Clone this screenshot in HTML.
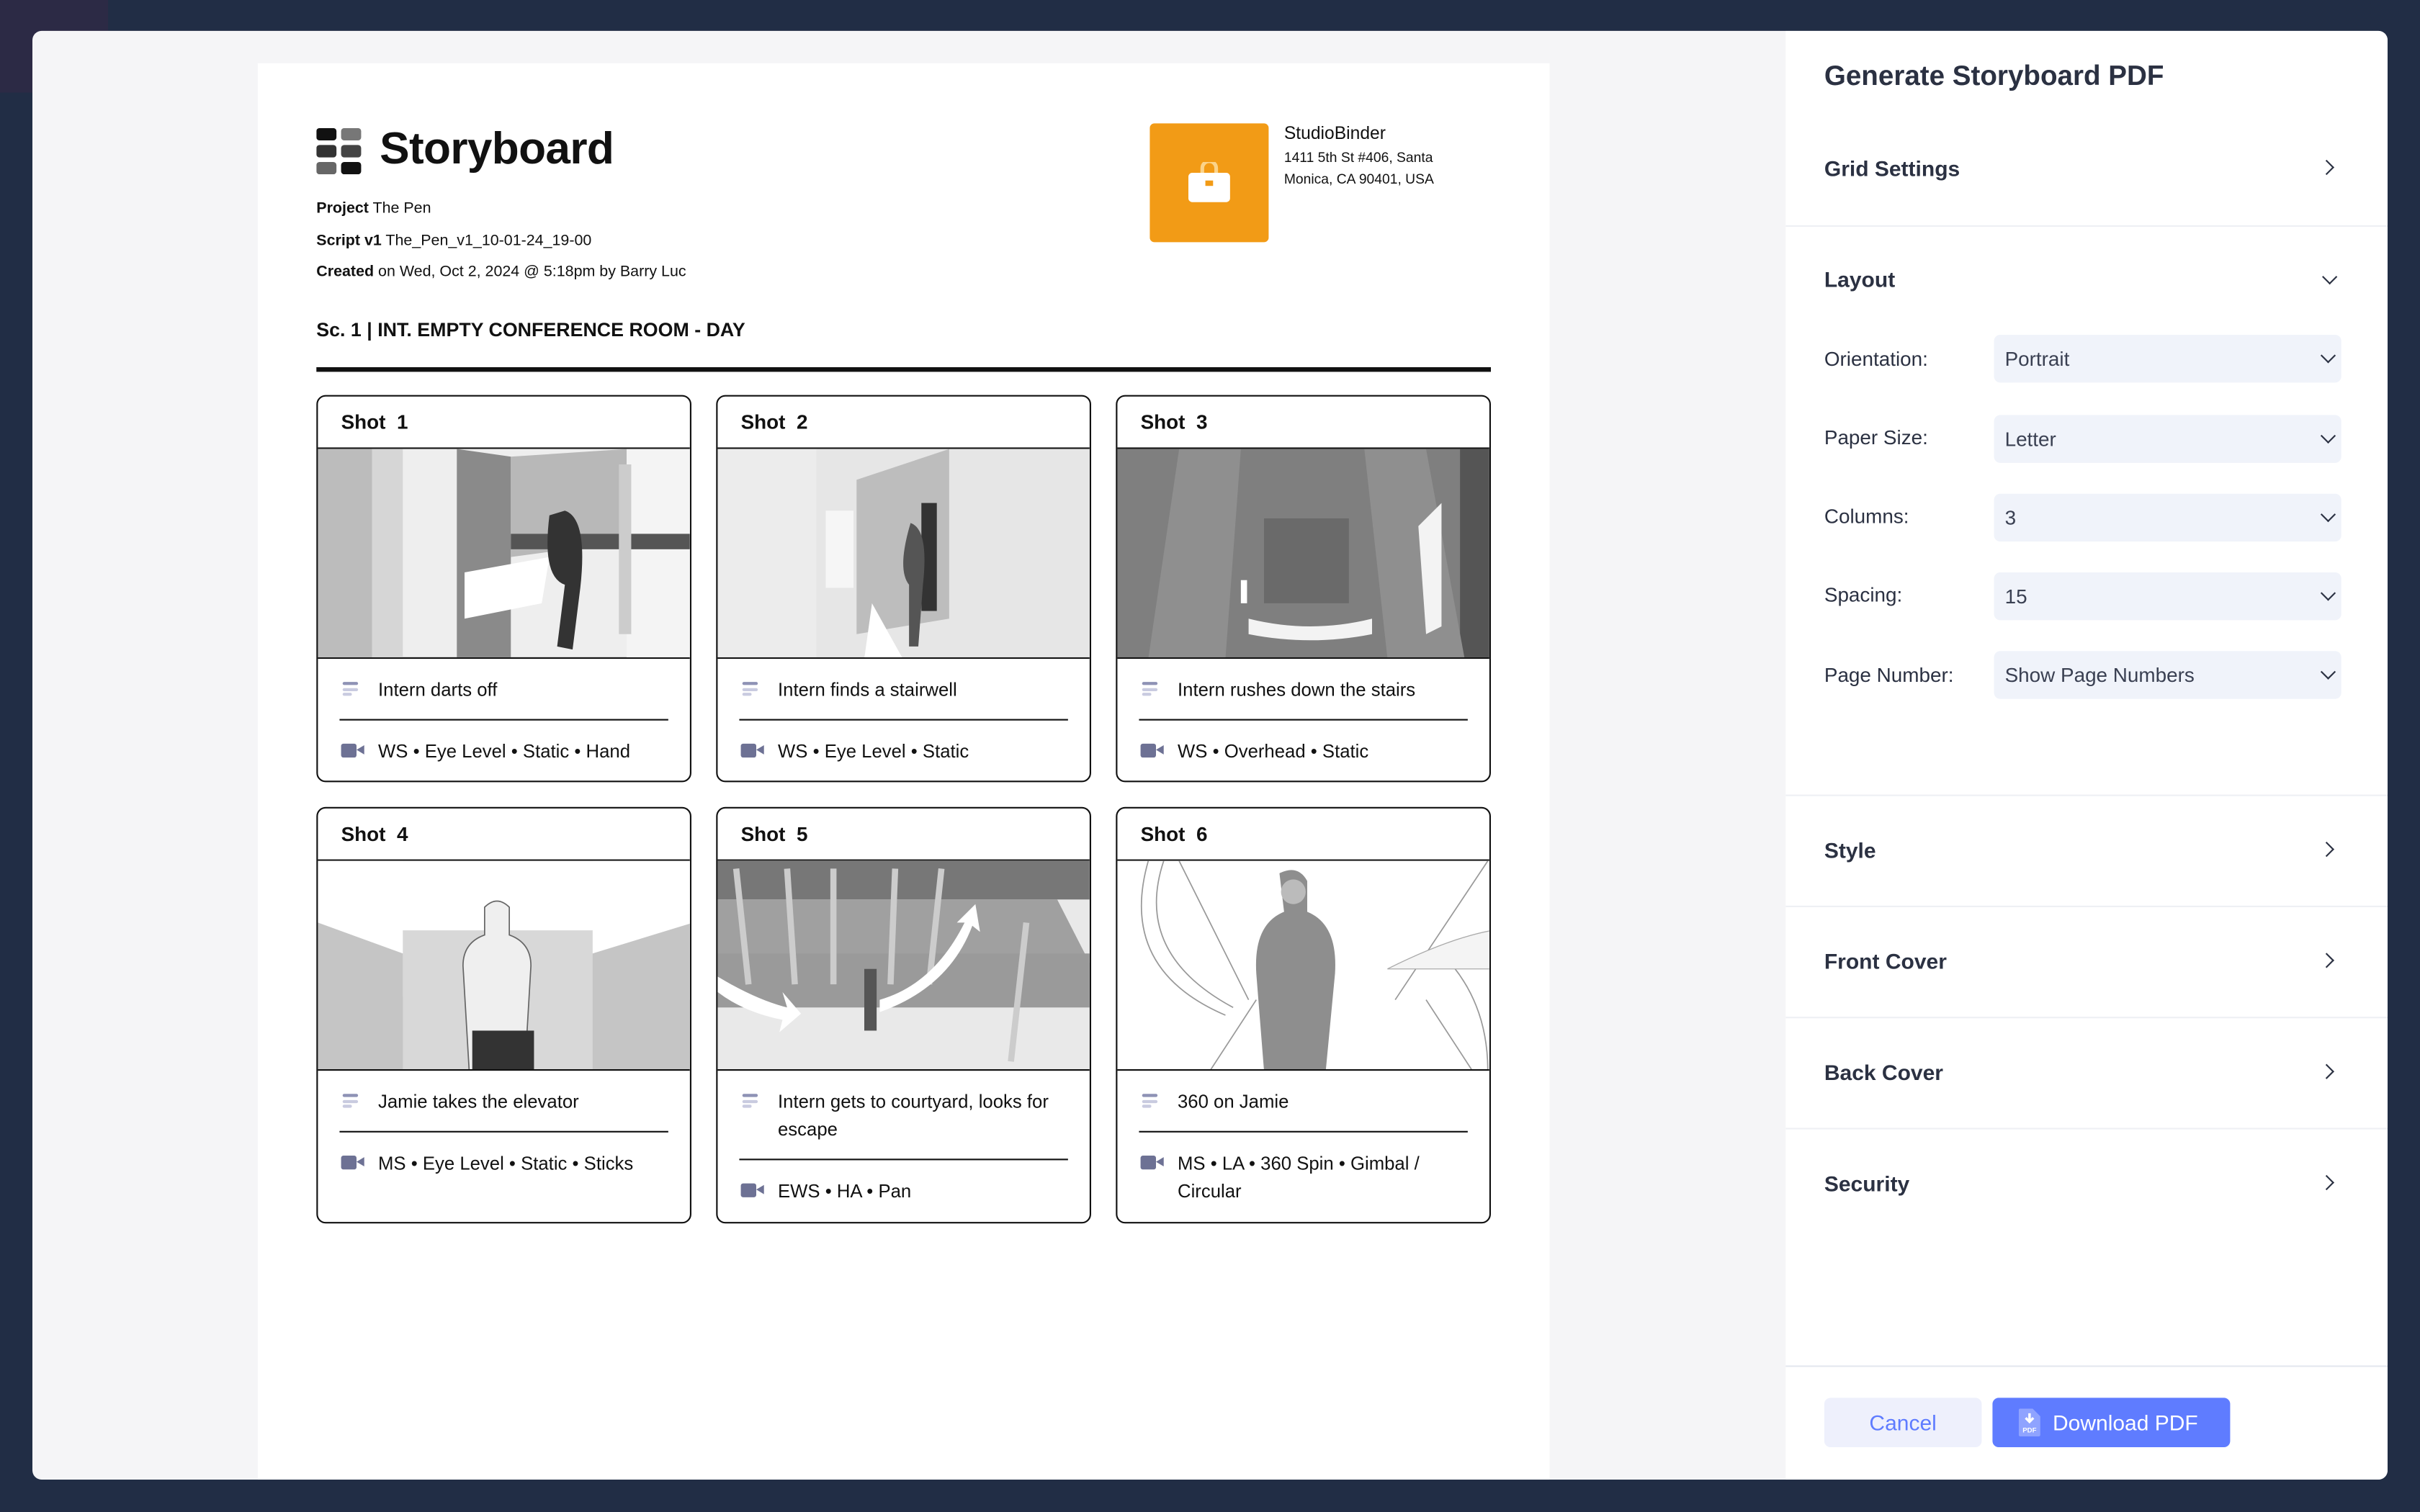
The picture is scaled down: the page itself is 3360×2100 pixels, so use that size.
<!DOCTYPE html>
<html><head><meta charset="utf-8"><style>
*{box-sizing:border-box;margin:0;padding:0}
html,body{width:3360px;height:2100px;overflow:hidden;background:#212d45}
#s{position:absolute;left:0;top:0;width:1568px;height:980px;transform:scale(2.142857);transform-origin:0 0;font-family:"Liberation Sans",sans-serif;background:#212d45}
.abs{position:absolute}
.modal{left:21px;top:20px;width:1526px;height:939px;background:#f5f5f7;border-radius:6px;overflow:hidden}
.page{left:146px;top:21px;width:837px;height:918px;background:#fff}
.rp{left:1136px;top:0;width:390px;height:939px;background:#fff}
.card{position:absolute;width:243px;border:1.3px solid #111;border-radius:6px;background:#fff;overflow:hidden}
.card .h{height:34px;border-bottom:1.5px solid #111;font-weight:bold;font-size:13px;padding:9px 0 0 15px;color:#111}
.card .img{height:136px;border-bottom:1.5px solid #111;position:relative;overflow:hidden}
.card .t{font-size:12px;color:#111;padding:0 12px 0 39px;position:relative;line-height:18px}
.card .ln{margin:0 14px;border-top:1.5px solid #111}
.ti{position:absolute;left:16px;top:4px;width:10px}
.ti i{display:block;height:2px;background:#8e92b5;margin-bottom:1.6px;border-radius:1px}
.ti i:nth-child(2){background:#c9cbe0}.ti i:nth-child(3){background:#c9cbe0;width:6px}
.cam{position:absolute;left:15px;top:4px;width:10px;height:9px;background:#6d7194;border-radius:1.5px}
.cam:after{content:"";position:absolute;left:10px;top:1px;border-right:5px solid #6d7194;border-top:3.5px solid transparent;border-bottom:3.5px solid transparent}
.rt{color:#2b3142;font-weight:bold;font-size:14px}
.lbl{position:absolute;left:25px;font-size:13px;color:#2b3142}
.sel{position:absolute;left:135px;width:225px;height:31px;background:#f0f3fa;border-radius:4px;font-size:13px;color:#3a4052;padding:8px 0 0 7px}
.chev{position:absolute;width:7px;height:7px;border-right:1.3px solid #2b3142;border-bottom:1.3px solid #2b3142}
.dv{position:absolute;left:0;width:390px;border-top:1px solid #eef0f4}
</style></head><body><div id="s">
<div class="abs" style="left:0;top:0;width:70px;height:60px;background:#2c2a45"></div>
<div class="abs modal">
 <div class="abs page">
  <svg class="abs" style="left:38px;top:42px" width="30" height="30" viewBox="0 0 30 30">
   <rect x="0" y="0" width="13" height="8" rx="2" fill="#111"/><rect x="16" y="0" width="13" height="8" rx="2" fill="#777"/>
   <rect x="0" y="11" width="13" height="8" rx="2" fill="#333"/><rect x="16" y="11" width="13" height="8" rx="2" fill="#444"/>
   <rect x="0" y="22" width="13" height="8" rx="2" fill="#666"/><rect x="16" y="22" width="13" height="8" rx="2" fill="#111"/>
  </svg>
  <div class="abs" style="left:79px;top:40px;font-size:29px;font-weight:bold;color:#111;letter-spacing:-0.3px">Storyboard</div>
  <div class="abs" style="left:38px;top:85px;font-size:10px;color:#111;line-height:20.7px"><b>Project</b> The Pen<br><b>Script v1</b> The_Pen_v1_10-01-24_19-00<br><b>Created</b> on Wed, Oct 2, 2024 @ 5:18pm by Barry Luc</div>
  <div class="abs" style="left:38px;top:166px;font-size:12.5px;font-weight:bold;color:#111">Sc. 1 | INT. EMPTY CONFERENCE ROOM - DAY</div>
  <div class="abs" style="left:38px;top:197px;width:761px;height:2.5px;background:#111"></div>
  <div class="abs" style="left:578px;top:39px;width:77px;height:77px;background:#f29b16;border-radius:3px"></div>
  <svg class="abs" style="left:602px;top:64px" width="29" height="27" viewBox="0 0 29 27"><path d="M10 7V4a4 4 0 0 1 9 0v3" stroke="#fbd38a" stroke-width="2.4" fill="none"/><rect x="1" y="7" width="27" height="19" rx="2.5" fill="#fff"/><rect x="12" y="12" width="5" height="3.5" fill="#f29b16"/></svg>
  <div class="abs" style="left:665px;top:40px;font-size:11.5px;color:#111">StudioBinder</div>
  <div class="abs" style="left:665px;top:55px;font-size:9px;color:#111;line-height:13.5px">1411 5th St #406, Santa<br>Monica, CA 90401, USA</div>

  <div class="card" style="left:38px;top:215px;height:251px"><div class="h">Shot&nbsp; 1</div>
   <div class="img" style="background:#eee"><svg width="243" height="136"><rect width="55" height="136" fill="#d6d6d6"/><rect x="0" width="35" height="136" fill="#bcbcbc"/><polygon points="90,0 125,5 125,136 90,136" fill="#8a8a8a"/><polygon points="125,5 200,0 200,60 125,70" fill="#b8b8b8"/><rect x="200" y="0" width="43" height="136" fill="#f4f4f4"/><rect x="125" y="55" width="118" height="10" fill="#555"/><polygon points="95,80 150,70 145,100 95,110" fill="#fff"/><path d="M160 40 q15 5 10 50 l-5 40 l-10 -2 l5 -40 q-15 -5 -10 -45z" fill="#333"/><rect x="195" y="10" width="8" height="110" fill="#ccc"/></svg></div>
   <div class="t" style="margin-top:11px"><div class="ti"><i></i><i></i><i></i></div>Intern darts off</div>
   <div class="ln" style="margin-top:10px"></div>
   <div class="t" style="margin-top:11px"><div class="cam"></div>WS • Eye Level • Static • Hand</div></div>
  <div class="card" style="left:297px;top:215px;height:251px"><div class="h">Shot&nbsp; 2</div>
   <div class="img" style="background:#e3e3e3"><svg width="243" height="136"><rect width="64" height="136" fill="#ececec"/><polygon points="64,0 243,0 243,136 64,136" fill="#e6e6e6"/><polygon points="90,20 150,0 150,110 90,120" fill="#bdbdbd"/><rect x="70" y="40" width="18" height="50" fill="#f6f6f6"/><rect x="132" y="35" width="10" height="70" fill="#333"/><path d="M125 48 q12 4 8 40 l-3 40 l-6 0 l0-40 q-8-10 1-40z" fill="#555"/><path d="M100 100 l20 36 l-25 0z" fill="#fff"/></svg></div>
   <div class="t" style="margin-top:11px"><div class="ti"><i></i><i></i><i></i></div>Intern finds a stairwell</div>
   <div class="ln" style="margin-top:10px"></div>
   <div class="t" style="margin-top:11px"><div class="cam"></div>WS • Eye Level • Static</div></div>
  <div class="card" style="left:556px;top:215px;height:251px"><div class="h">Shot&nbsp; 3</div>
   <div class="img" style="background:#7b7b7b"><svg width="243" height="136"><rect x="0" width="243" height="136" fill="#7f7f7f"/><rect x="222" y="0" width="21" height="136" fill="#555"/><rect x="95" y="45" width="55" height="55" fill="#6a6a6a"/><polygon points="40,0 80,0 70,136 20,136" fill="#8f8f8f"/><polygon points="160,0 200,0 225,136 175,136" fill="#8f8f8f"/><path d="M85 110 q40 10 80 0 l0 10 q-40 8 -80 0z" fill="#f3f3f3"/><path d="M195 50 l15 -15 l0 80 l-10 5z" fill="#f3f3f3"/><rect x="80" y="85" width="4" height="15" fill="#fff"/></svg></div>
   <div class="t" style="margin-top:11px"><div class="ti"><i></i><i></i><i></i></div>Intern rushes down the stairs</div>
   <div class="ln" style="margin-top:10px"></div>
   <div class="t" style="margin-top:11px"><div class="cam"></div>WS • Overhead • Static</div></div>

  <div class="card" style="left:38px;top:482px;height:270px"><div class="h">Shot&nbsp; 4</div>
   <div class="img" style="background:#fff"><svg width="243" height="136"><rect x="0" y="60" width="243" height="76" fill="#c8c8c8"/><polygon points="0,0 243,0 243,90 178,88 178,0 55,0 55,88 0,90" fill="#fff"/><rect x="55" y="45" width="123" height="91" fill="#d8d8d8"/><polygon points="0,40 55,60 55,136 0,136" fill="#c5c5c5"/><polygon points="243,40 178,60 178,136 243,136" fill="#c5c5c5"/><path d="M108 30 q8-8 16 0 l0 18 q14 5 14 20 l-4 68 h-36 l-4-68 q0-15 14-20z" fill="#efefef" stroke="#666" stroke-width="0.8"/><rect x="100" y="110" width="40" height="26" fill="#333"/></svg></div>
   <div class="t" style="margin-top:11px"><div class="ti"><i></i><i></i><i></i></div>Jamie takes the elevator</div>
   <div class="ln" style="margin-top:10px"></div>
   <div class="t" style="margin-top:11px"><div class="cam"></div>MS • Eye Level • Static • Sticks</div></div>
  <div class="card" style="left:297px;top:482px;height:270px"><div class="h">Shot&nbsp; 5</div>
   <div class="img" style="background:#e9e9e9"><svg width="243" height="136"><rect width="243" height="25" fill="#777"/><polygon points="0,25 220,25 243,70 243,136 0,136" fill="#a0a0a0"/><rect x="0" y="60" width="243" height="76" fill="#9a9a9a"/><rect x="0" y="95" width="243" height="41" fill="#e9e9e9"/><g stroke="#ccc" stroke-width="4"><line x1="12" y1="5" x2="20" y2="80"/><line x1="45" y1="5" x2="50" y2="80"/><line x1="75" y1="5" x2="75" y2="80"/><line x1="115" y1="5" x2="112" y2="80"/><line x1="145" y1="5" x2="137" y2="80"/><line x1="200" y1="40" x2="190" y2="130"/></g><path d="M0 75 q25 15 45 20 l-3-10 l12 14 l-14 12 l2-8 q-25-5-42-18z" fill="#fff"/><path d="M105 90 q35-10 55-50 l-5 0 l12-12 l3 18 l-5-4 q-15 40-60 56z" fill="#fff"/><rect x="95" y="70" width="8" height="40" fill="#555"/></svg></div>
   <div class="t" style="margin-top:11px;padding-right:18px"><div class="ti"><i></i><i></i><i></i></div>Intern gets to courtyard, looks for escape</div>
   <div class="ln" style="margin-top:10px"></div>
   <div class="t" style="margin-top:11px"><div class="cam"></div>EWS • HA • Pan</div></div>
  <div class="card" style="left:556px;top:482px;height:270px"><div class="h">Shot&nbsp; 6</div>
   <div class="img" style="background:#fff"><svg width="243" height="136"><g stroke="#999" fill="none" stroke-width="0.8"><path d="M30 0 q-20 60 45 95"/><path d="M20 0 q-20 70 50 100"/><path d="M40 0 l45 90"/><path d="M240 0 l-60 90"/><path d="M210 60 q30 30 30 76"/><line x1="60" y1="136" x2="90" y2="90"/><line x1="230" y1="136" x2="200" y2="90"/></g><path d="M175 70 q40-20 68-25 l0 25 q-30 0 -68 0z" fill="#f4f4f4" stroke="#aaa" stroke-width="0.6"/><path d="M105 8 q12-6 18 5 l0 20 q20 8 18 40 l-6 63 h-40 l-5-63 q-2-32 18-40z" fill="#8e8e8e"/><circle cx="114" cy="20" r="8" fill="#bbb"/></svg></div>
   <div class="t" style="margin-top:11px"><div class="ti"><i></i><i></i><i></i></div>360 on Jamie</div>
   <div class="ln" style="margin-top:10px"></div>
   <div class="t" style="margin-top:11px"><div class="cam"></div>MS • LA • 360 Spin • Gimbal / Circular</div></div>
 </div>

 <div class="abs rp">
  <div class="abs rt" style="left:25px;top:19px;font-size:18px">Generate Storyboard PDF</div>
  <div class="abs rt" style="left:25px;top:81px">Grid Settings</div><div class="chev" style="left:347px;top:85px;transform:rotate(-45deg)"></div>
  <div class="dv" style="top:126px"></div>
  <div class="abs rt" style="left:25px;top:153px">Layout</div><div class="chev" style="left:349px;top:156px;transform:rotate(45deg)"></div>
  <div class="lbl" style="top:205px">Orientation:</div><div class="sel" style="top:197px">Portrait</div><div class="chev" style="left:348px;top:207px;transform:rotate(45deg)"></div>
  <div class="lbl" style="top:256px">Paper Size:</div><div class="sel" style="top:249px">Letter</div><div class="chev" style="left:348px;top:259px;transform:rotate(45deg)"></div>
  <div class="lbl" style="top:307px">Columns:</div><div class="sel" style="top:300px">3</div><div class="chev" style="left:348px;top:310px;transform:rotate(45deg)"></div>
  <div class="lbl" style="top:358px">Spacing:</div><div class="sel" style="top:351px">15</div><div class="chev" style="left:348px;top:361px;transform:rotate(45deg)"></div>
  <div class="lbl" style="top:410px">Page Number:</div><div class="sel" style="top:402px">Show Page Numbers</div><div class="chev" style="left:348px;top:412px;transform:rotate(45deg)"></div>
  <div class="dv" style="top:495px"></div>
  <div class="abs rt" style="left:25px;top:523px">Style</div><div class="chev" style="left:347px;top:527px;transform:rotate(-45deg)"></div>
  <div class="dv" style="top:567px"></div>
  <div class="abs rt" style="left:25px;top:595px">Front Cover</div><div class="chev" style="left:347px;top:599px;transform:rotate(-45deg)"></div>
  <div class="dv" style="top:639px"></div>
  <div class="abs rt" style="left:25px;top:667px">Back Cover</div><div class="chev" style="left:347px;top:671px;transform:rotate(-45deg)"></div>
  <div class="dv" style="top:711px"></div>
  <div class="abs rt" style="left:25px;top:739px">Security</div><div class="chev" style="left:347px;top:743px;transform:rotate(-45deg)"></div>
  <div class="dv" style="top:865px;border-top:1.5px solid #e4e7ef"></div>
  <div class="abs" style="left:25px;top:886px;width:102px;height:32px;background:#eef0fc;border-radius:4px;color:#5f7cff;font-size:14px;text-align:center;padding-top:8px">Cancel</div>
  <div class="abs" style="left:134px;top:886px;width:154px;height:32px;background:#5f7cff;border-radius:4px;color:#fff;font-size:14px;padding:8px 0 0 39px">Download PDF</div>
  <svg class="abs" style="left:151px;top:893px" width="14" height="18" viewBox="0 0 14 18"><path d="M0 1a1 1 0 0 1 1-1h8l5 5v12a1 1 0 0 1-1 1H1a1 1 0 0 1-1-1z" fill="#8fa3ff"/><path d="M7 3v5M4.5 6L7 8.5 9.5 6" stroke="#fff" stroke-width="1.6" fill="none"/><text x="7" y="15.5" font-size="4.5" fill="#fff" text-anchor="middle" font-family="Liberation Sans" font-weight="bold">PDF</text></svg>
 </div>
</div>
</div></body></html>
